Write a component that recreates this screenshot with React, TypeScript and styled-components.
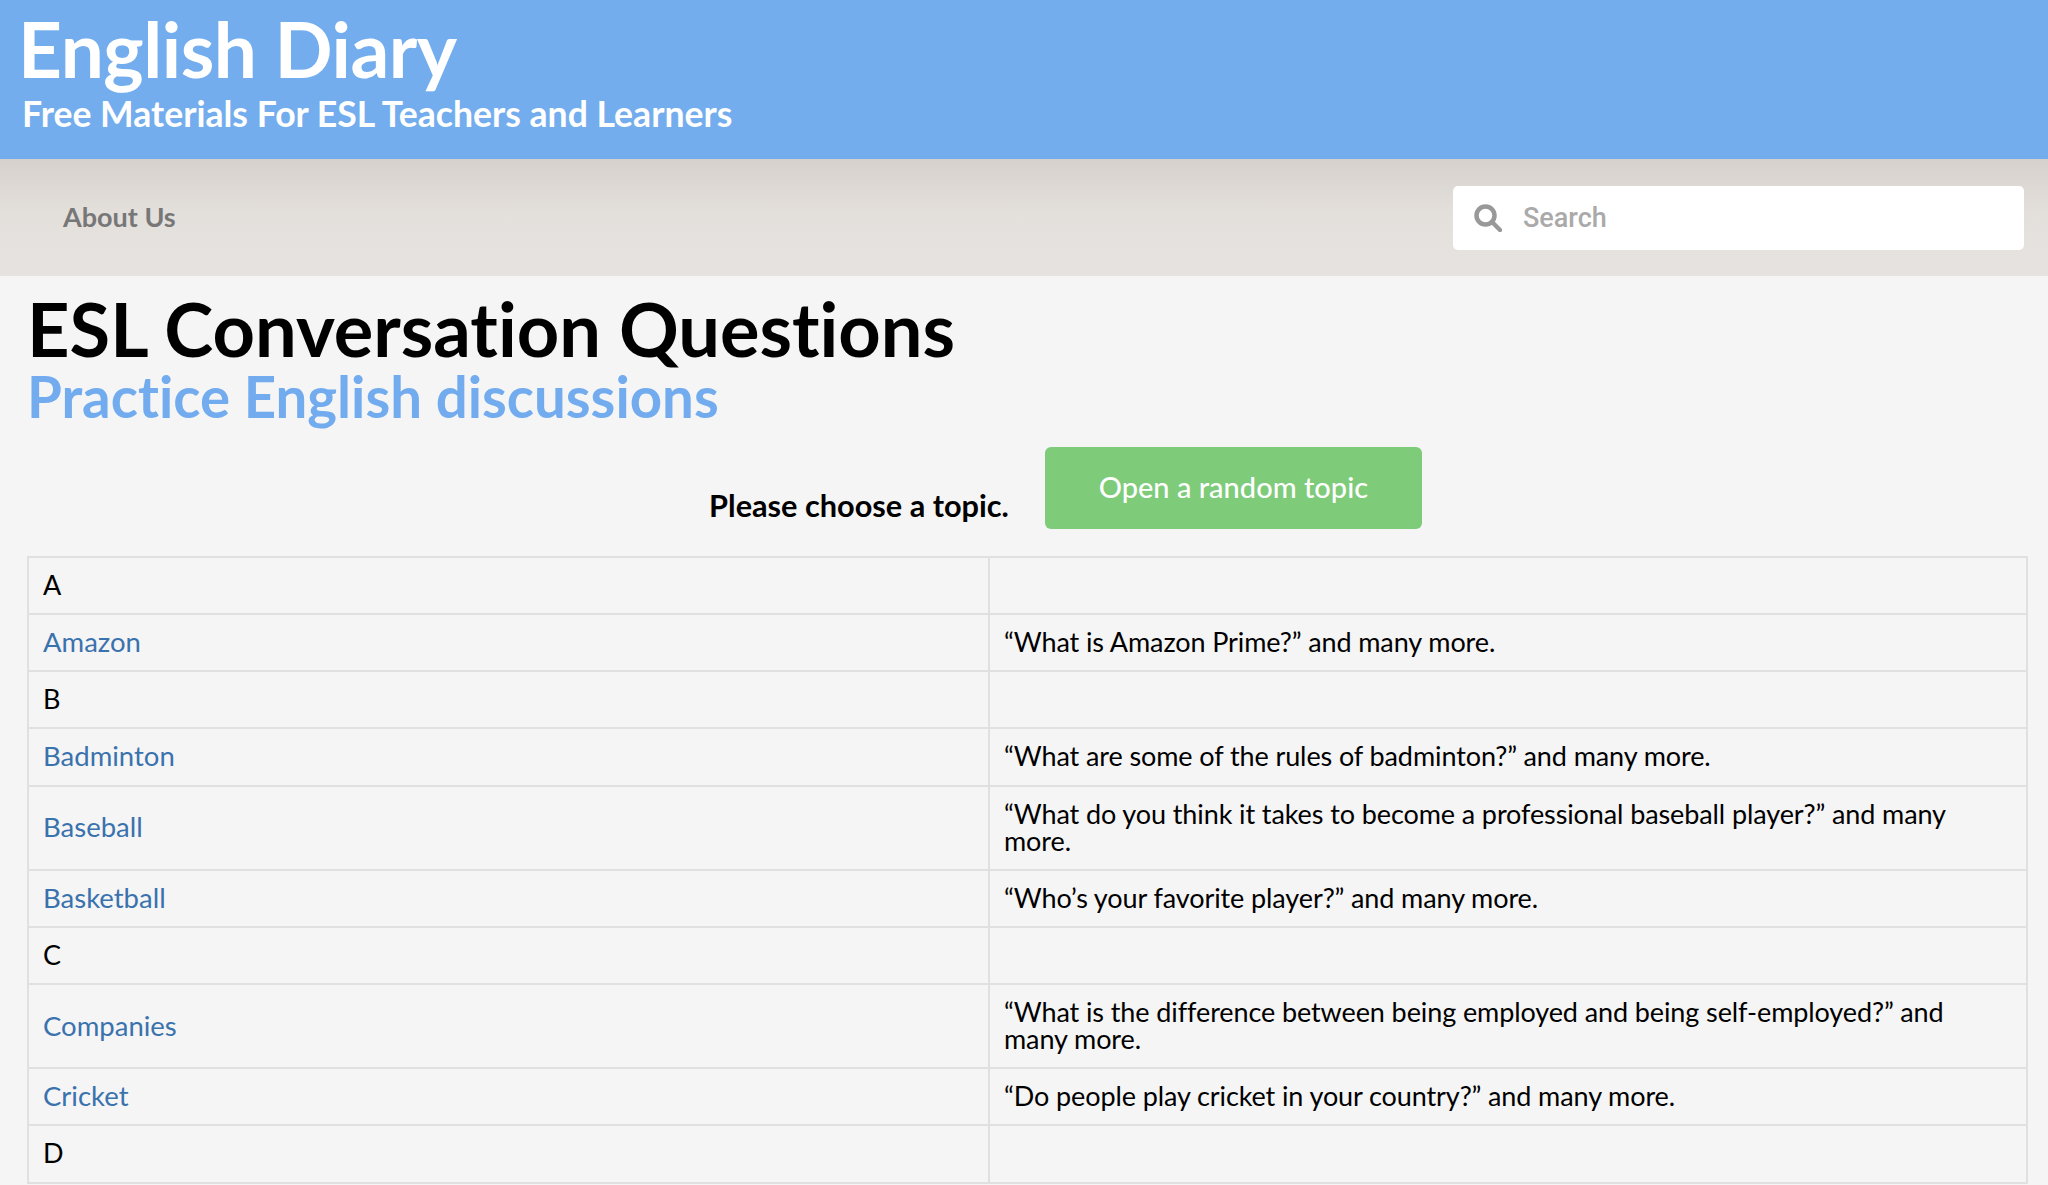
import React from "react";
import styled, { createGlobalStyle } from "styled-components";

const Global = createGlobalStyle`
  html, body { margin: 0; padding: 0; background: #f5f5f5; height: 1185px; overflow: hidden; }
  body { font-family: "Lato", "Liberation Sans", sans-serif; color: #000; font-variant-ligatures: none; }
`;

const Header = styled.header`
  background: #73adee;
  height: 159px;
  box-sizing: border-box;
  padding: 4px 20px 0;
  color: #fff;
`;
const SiteTitle = styled.div`
  font-size: 76.5px;
  line-height: 88px;
  font-weight: 700;
  letter-spacing: -0.5px;
  margin-left: -2px;
`;
const SiteTagline = styled.div`
  font-size: 35.6px;
  line-height: 44px;
  font-weight: 700;
  margin-left: 2px;
`;
const Nav = styled.nav`
  height: 117px;
  box-sizing: border-box;
  background: linear-gradient(to bottom, #d6d1cc 0%, #e3dfdb 45%, #e7e3e0 100%);
  display: flex;
  align-items: center;
  justify-content: space-between;
  padding: 0 24px 2px 63px;
`;
const NavLink = styled.a`
  font-size: 27px;
  font-weight: 700;
  color: #777;
`;
const SearchBox = styled.div`
  width: 571px;
  height: 64px;
  margin-top: 2px;
  background: #fff;
  border-radius: 5px;
  display: flex;
  align-items: center;
  padding-left: 21px;
  box-sizing: border-box;
  gap: 21px;
`;
const SearchLabel = styled.span`
  font-family: "Roboto", sans-serif;
  font-size: 27px;
  font-weight: 500;
  color: #aaa;
`;
const Main = styled.main`
  padding: 11px 20px 0 27px;
`;
const Title = styled.h1`
  margin: 0;
  font-size: 74px;
  line-height: 84px;
  font-weight: 700;
`;
const Subtitle = styled.h2`
  margin: 0;
  font-size: 56.4px;
  line-height: 51px;
  font-weight: 700;
  color: #72acee;
`;
const ChooseRow = styled.div`
  display: flex;
  justify-content: center;
  align-items: flex-end;
  gap: 36px;
  margin-top: 25px;
  padding-left: 76px;
  height: 82px;
`;
const ChooseText = styled.span`
  font-size: 30.7px;
  font-weight: 700;
  line-height: 38px;
  margin-bottom: 4px;
`;
const RandomButton = styled.a`
  width: 377px;
  height: 82px;
  background: #7ecb7a;
  border-radius: 6px;
  color: #fff;
  font-size: 29px;
  font-weight: 500;
  display: flex;
  align-items: center;
  justify-content: center;
  padding-bottom: 4px;
  box-sizing: border-box;
`;
const Table = styled.table`
  margin-top: 27px;
  width: 2001px;
  table-layout: fixed;
  border-collapse: collapse;
  font-size: 27px;
  line-height: 27.13px;
`;
const Cell = styled.td`
  border: 2px solid #e0e0e0;
  padding: 13px 14px 15px;
  vertical-align: middle;
  letter-spacing: -0.1px;
`;
const TopicCol = styled.col`
  width: 961px;
`;
const TopicLink = styled.a`
  color: #3a72ae;
  font-size: 27.5px;
  letter-spacing: 0;
`;

const rows: [string, string?][] = [
  ["A"],
  ["Amazon", "“What is Amazon Prime?” and many more."],
  ["B"],
  ["Badminton", "“What are some of the rules of badminton?” and many more."],
  ["Baseball", "“What do you think it takes to become a professional baseball player?” and many more."],
  ["Basketball", "“Who’s your favorite player?” and many more."],
  ["C"],
  ["Companies", "“What is the difference between being employed and being self-employed?” and many more."],
  ["Cricket", "“Do people play cricket in your country?” and many more."],
  ["D"],
];

export default function App() {
  return (
    <>
      <Global />
      <Header>
        <SiteTitle>English Diary</SiteTitle>
        <SiteTagline>Free Materials For ESL Teachers and Learners</SiteTagline>
      </Header>
      <Nav>
        <NavLink>About Us</NavLink>
        <SearchBox>
          <svg width="28" height="28" viewBox="0 0 28 28" fill="none" stroke="#999" strokeWidth="4.5">
            <circle cx="11.5" cy="11.5" r="9" />
            <path d="M18 18l8 8" strokeLinecap="round" />
          </svg>
          <SearchLabel>Search</SearchLabel>
        </SearchBox>
      </Nav>
      <Main>
        <Title>ESL Conversation Questions</Title>
        <Subtitle>Practice English discussions</Subtitle>
        <ChooseRow>
          <ChooseText>Please choose a topic.</ChooseText>
          <RandomButton>Open a random topic</RandomButton>
        </ChooseRow>
        <Table>
          <colgroup>
            <TopicCol />
            <col />
          </colgroup>
          <tbody>
            {rows.map(([a, b]) => (
              <tr key={a}>
                <Cell>{b ? <TopicLink>{a}</TopicLink> : a}</Cell>
                <Cell>{b}</Cell>
              </tr>
            ))}
          </tbody>
        </Table>
      </Main>
    </>
  );
}
